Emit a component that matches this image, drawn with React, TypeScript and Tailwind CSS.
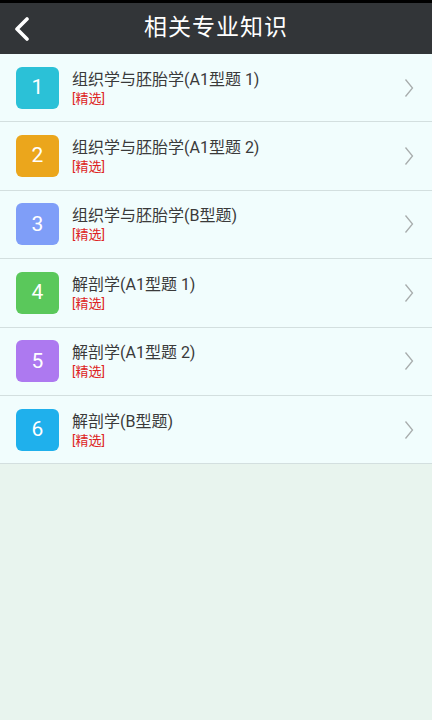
const items = [
  { n: "1", title: "组织学与胚胎学(A1型题 1)", color: "bg-[#2bc1d7]" },
  { n: "2", title: "组织学与胚胎学(A1型题 2)", color: "bg-[#eba61c]" },
  { n: "3", title: "组织学与胚胎学(B型题)", color: "bg-[#7f9ef8]" },
  { n: "4", title: "解剖学(A1型题 1)", color: "bg-[#5ac85b]" },
  { n: "5", title: "解剖学(A1型题 2)", color: "bg-[#ad79f0]" },
  { n: "6", title: "解剖学(B型题)", color: "bg-[#1fb0ec]" },
];

const App = () => {
  return (
    <div
      className="w-[432px] h-[720px] bg-[#e8f4ee] flex flex-col"
      style={{ fontFamily: '"Roboto", "Noto Sans CJK SC", sans-serif' }}
    >
      <div className="h-[3px] bg-black" />
      <header className="relative h-[51px] bg-[#323538] flex items-center justify-center">
        <svg
          className="absolute left-[14px] top-[14px]"
          width="16"
          height="24"
          viewBox="0 0 16 24"
        >
          <path
            d="M13 2 L3 12 L13 22"
            fill="none"
            stroke="#fff"
            strokeWidth="3.6"
            strokeLinecap="round"
            strokeLinejoin="round"
          />
        </svg>
        <h1 className="text-white text-[23px] tracking-[1px]">相关专业知识</h1>
      </header>
      <ul>
        {items.map((it) => (
          <li
            key={it.n}
            className="h-[68.4px] bg-[#f1fdfd] border-b border-[#d3dfdf] flex items-center pl-4 pr-[18px]"
          >
            <div
              className={`w-[43px] h-[42px] rounded-[6px] ${it.color} flex items-center justify-center text-white text-[21px]`}
            >
              {it.n}
            </div>
            <div className="flex-1 ml-[13px] flex flex-col pt-[1px]">
              <span className="text-[16px] leading-[20px] text-[#3a3a3a]">{it.title}</span>
              <span className="text-[13px] leading-[17px] text-[#dd2222]">[精选]</span>
            </div>
            <svg width="10" height="20" viewBox="0 0 10 20">
              <path
                d="M1.5 1.5 L8.5 10 L1.5 18.5"
                fill="none"
                stroke="#a8adad"
                strokeWidth="1.3"
              />
            </svg>
          </li>
        ))}
      </ul>
    </div>
  );
};

export default App;
